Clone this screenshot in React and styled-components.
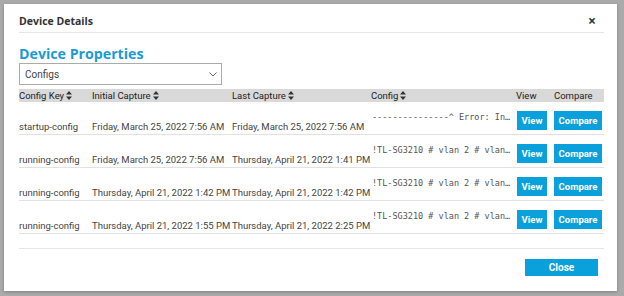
import React from 'react'
import styled, { createGlobalStyle } from 'styled-components'

const GlobalStyle = createGlobalStyle`
  html, body {
    margin: 0;
    padding: 0;
  }
  body {
    font-family: Roboto, "Liberation Sans", sans-serif;
  }
`;

const Overlay = styled.div`
  background: #aaaaaa;
  box-sizing: border-box;
  height: 296px;
  padding: 4px;
`;

const Modal = styled.div`
  background: #fff;
  box-shadow: 0 1px 3px rgba(0, 0, 0, .25);
  box-sizing: border-box;
  display: flex;
  flex-direction: column;
  height: 287px;
  padding: 0 13px 0 15px;
  width: 613px;
`;

const Header = styled.div`
  align-items: center;
  border-bottom: 1px solid #e6e6e6;
  box-sizing: border-box;
  display: flex;
  height: 29px;
  justify-content: space-between;
  padding-top: 5px;

  h4 {
    color: #333;
    font-family: "Open Sans", sans-serif;
    font-size: 10.5px;
    font-weight: 700;
    margin: 0;
  }
`;

const CloseX = styled.span`
  color: #333;
  font-family: "Open Sans", sans-serif;
  font-size: 14px;
  font-weight: 700;
  line-height: 1;
  margin-right: 8px;
`;

const Title = styled.h2`
  color: #1b9ad6;
  font-family: "Open Sans", sans-serif;
  font-size: 14.2px;
  font-weight: 700;
  line-height: 19px;
  margin: 11px 0 0 0;
`;

const Select = styled.div`
  align-items: center;
  border: 1px solid #ababab;
  box-sizing: border-box;
  color: #444;
  display: flex;
  font-size: 10px;
  height: 22px;
  justify-content: space-between;
  padding: 0 4px 0 5px;
  width: 203px;
`;

const Table = styled.div`
  margin-top: 4px;
`;

const cols = '73px 140px 139px 145px 38px 50px';

const HeadRow = styled.div`
  align-items: center;
  background: #d9d9d9;
  color: #222;
  display: grid;
  font-size: 9.5px;
  grid-template-columns: ${cols};
  height: 13px;
`;

const HeadCell = styled.div`
  align-items: center;
  display: flex;
  gap: 2px;
  white-space: nowrap;
`;

const Row = styled.div`
  border-bottom: 1px solid #e2e2e2;
  box-sizing: border-box;
  display: grid;
  grid-template-columns: ${cols};
  height: 33px;
`;

const TextCell = styled.div`
  align-self: end;
  color: #444;
  font-size: 9.5px;
  line-height: 13px;
  padding-bottom: 1px;
  white-space: nowrap;
`;

const CodeCell = styled.div`
  align-self: start;
  color: #555;
  font-family: "DejaVu Sans Mono", monospace;
  font-size: 8.5px;
  line-height: 13px;
  overflow: hidden;
  padding: 9px 4px 0 1px;
  text-overflow: ellipsis;
  white-space: nowrap;
`;

const Btn = styled.button`
  align-self: start;
  background: #0aa0db;
  border: 0;
  color: #fff;
  cursor: pointer;
  font-family: Roboto, sans-serif;
  font-size: 9.5px;
  font-weight: 700;
  height: 19px;
  margin-top: 9px;
  margin-left: ${p => p.ml || 0}px;
  padding: 0;
  width: ${p => p.w}px;
`;

const Footer = styled.div`
  border-top: 1px solid #e6e6e6;
  display: flex;
  justify-content: flex-end;
  margin-top: 14px;
  padding: 10px 6px 0 0;
`;

const CloseBtn = styled.button`
  background: #0aa0db;
  border: 0;
  color: #fff;
  font-family: Roboto, sans-serif;
  font-size: 10px;
  font-weight: 700;
  height: 17px;
  padding: 0;
  width: 73px;
`;

const SortIcon = () => (
  <svg width="6" height="9" viewBox="0 0 6 9">
    <path d="M3 0 L6 3.5 H0 Z M3 9 L6 5.5 H0 Z" fill="#333" />
  </svg>
);

const rows = [
  ['startup-config', 'Friday, March 25, 2022 7:56 AM', 'Friday, March 25, 2022 7:56 AM', '---------------^ Error: Invalid input detected'],
  ['running-config', 'Friday, March 25, 2022 7:56 AM', 'Thursday, April 21, 2022 1:41 PM', '!TL-SG3210 # vlan 2 # vlan 3 # interface'],
  ['running-config', 'Thursday, April 21, 2022 1:42 PM', 'Thursday, April 21, 2022 1:42 PM', '!TL-SG3210 # vlan 2 # vlan 3 # interface'],
  ['running-config', 'Thursday, April 21, 2022 1:55 PM', 'Thursday, April 21, 2022 2:25 PM', '!TL-SG3210 # vlan 2 # vlan 3 # interface'],
];

const App = () => (
  <>
    <GlobalStyle />
    <Overlay>
      <Modal>
        <Header>
          <h4>Device Details</h4>
          <CloseX>×</CloseX>
        </Header>
        <Title>Device Properties</Title>
        <Select>
          <span>Configs</span>
          <svg width="8" height="5" viewBox="0 0 8 5">
            <path d="M0.5 0.5 L4 4 L7.5 0.5" fill="none" stroke="#666" strokeWidth="1" />
          </svg>
        </Select>
        <Table>
          <HeadRow>
            <HeadCell>Config Key <SortIcon /></HeadCell>
            <HeadCell>Initial Capture <SortIcon /></HeadCell>
            <HeadCell>Last Capture <SortIcon /></HeadCell>
            <HeadCell>Config <SortIcon /></HeadCell>
            <HeadCell>View</HeadCell>
            <HeadCell>Compare</HeadCell>
          </HeadRow>
          {rows.map((r, i) => (
            <Row key={i}>
              <TextCell>{r[0]}</TextCell>
              <TextCell>{r[1]}</TextCell>
              <TextCell>{r[2]}</TextCell>
              <CodeCell>{r[3]}</CodeCell>
              <Btn w={30} ml={1}>View</Btn>
              <Btn w={48}>Compare</Btn>
            </Row>
          ))}
        </Table>
        <Footer>
          <CloseBtn>Close</CloseBtn>
        </Footer>
      </Modal>
    </Overlay>
  </>
)

export default App
